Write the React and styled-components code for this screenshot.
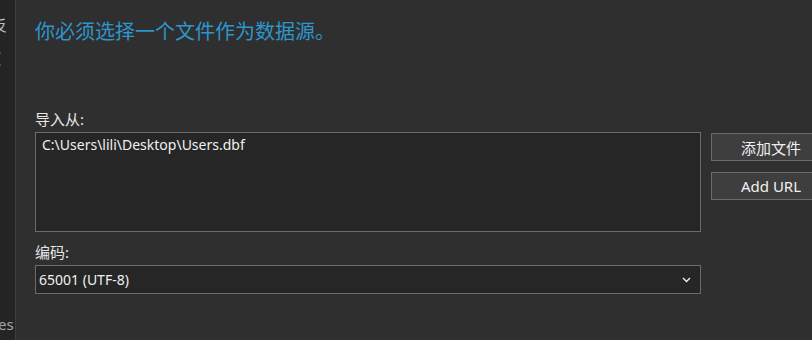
import styled, { createGlobalStyle } from "styled-components"

const GlobalStyle = createGlobalStyle`
  html, body {
    margin: 0;
    padding: 0;
    background: #2f2f2f;
    overflow: hidden;
  }
  * {
    box-sizing: border-box;
  }
`

const FONT = `"Noto Sans", "Noto Sans CJK SC", sans-serif`

export default function App() {
  return (
    <>
      <GlobalStyle />
      <Window>
        <SideStrip>
          <SideGlyph>反</SideGlyph>
          <RedDot $top={52} />
          <RedDot $top={64} />
          <SideTail>es</SideTail>
        </SideStrip>
        <Main>
          <Title>你必须选择一个文件作为数据源。</Title>
          <Label>导入从:</Label>
          <SourceRow>
            <PathBox>C:\Users\lili\Desktop\Users.dbf</PathBox>
            <ButtonStack>
              <Button>添加文件</Button>
              <Button>Add URL</Button>
            </ButtonStack>
          </SourceRow>
          <Label $top={10}>编码:</Label>
          <Select>
            <span>65001 (UTF-8)</span>
            <svg width="9" height="6" viewBox="0 0 9 6">
              <path d="M1 1 L4.5 4.5 L8 1" stroke="#f0f0f0" strokeWidth="1.4" fill="none" />
            </svg>
          </Select>
        </Main>
      </Window>
    </>
  )
}

const Window = styled.div`
  display: flex;
  width: 812px;
  height: 340px;
  font-family: ${FONT};
  color: #e6e6e6;
`

const SideStrip = styled.div`
  position: relative;
  width: 16px;
  flex: none;
  background: #242424;
  border-right: 1px solid #3e3e3e;
  overflow: hidden;
`

const SideGlyph = styled.div`
  position: absolute;
  top: 14px;
  left: -8px;
  font-size: 15px;
  color: #bdbdbd;
`

const SideTail = styled.div`
  position: absolute;
  top: 314px;
  left: -2px;
  font-size: 15px;
  color: #a8a8a8;
`

const RedDot = styled.div`
  position: absolute;
  top: ${(p) => p.$top}px;
  left: 0;
  width: 1px;
  height: 2px;
  background: #7a3a2a;
`

const Main = styled.div`
  flex: 1;
  padding: 18px 0 0 19px;
  min-width: 0;
`

const Title = styled.div`
  font-size: 20px;
  line-height: 28px;
  color: #2d96cc;
  margin-bottom: 63px;
`

const Label = styled.div`
  font-size: 15px;
  line-height: 20px;
  color: #e6e6e6;
  margin-top: ${(p) => p.$top || 0}px;
  margin-bottom: 3px;
`

const SourceRow = styled.div`
  display: flex;
  gap: 10px;
  align-items: flex-start;
`

const PathBox = styled.div`
  width: 666px;
  height: 100px;
  flex: none;
  background: #262626;
  border: 1px solid #6b6b6b;
  padding: 2px 6px;
  font-size: 14px;
  line-height: 20px;
  color: #f0f0f0;
`

const ButtonStack = styled.div`
  display: flex;
  flex-direction: column;
  gap: 11px;
  padding-top: 1px;
`

const Button = styled.div`
  width: 120px;
  height: 28px;
  flex: none;
  display: flex;
  align-items: center;
  justify-content: center;
  background: #3e3e3e;
  border: 1px solid #6b6b6b;
  font-size: 15px;
  color: #f0f0f0;
`

const Select = styled.div`
  width: 666px;
  height: 29px;
  display: flex;
  align-items: center;
  justify-content: space-between;
  background: #262626;
  border: 1px solid #6b6b6b;
  padding: 0 9px 0 3px;
  font-size: 14px;
  color: #f0f0f0;
`
